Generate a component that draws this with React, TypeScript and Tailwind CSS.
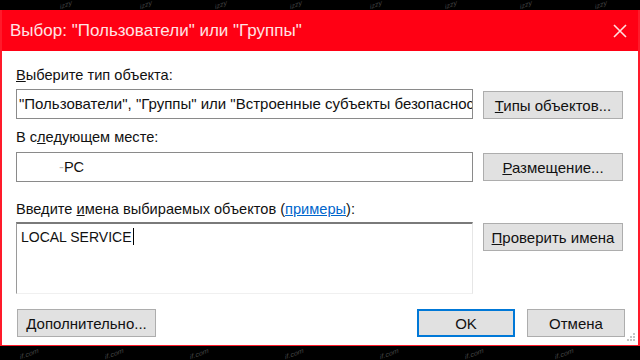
import React from "react";

const font = "font-['Segoe_UI','Liberation_Sans',Arial,sans-serif]";

function Btn({ children, primary }: { children: React.ReactNode; primary?: boolean }) {
  return (
    <button
      className={`h-[28px] w-full bg-[#e1e1e1] text-[15px] text-[#111] leading-none ${
        primary ? "border-2 border-[#0078d7]" : "border border-[#adadad]"
      }`}
    >
      {children}
    </button>
  );
}

const marksTop = [60, 140, 215, 290, 370, 445, 520, 595];
const marksBottom = [20, 105, 190, 285, 380, 465, 555];

export default function App() {
  return (
    <div className={`relative h-[360px] w-[640px] overflow-hidden bg-black ${font}`}>
      {marksTop.map((x) => (
        <span
          key={"t" + x}
          className="absolute top-[1px] -skew-y-[20deg] text-[7px] leading-none text-[#454545]"
          style={{ left: x }}
        >
          izzy
        </span>
      ))}
      {marksBottom.map((x) => (
        <span
          key={"b" + x}
          className="absolute top-[350px] -skew-y-[20deg] text-[7px] leading-none text-[#454545]"
          style={{ left: x }}
        >
          if.com
        </span>
      ))}

      <div className="relative mt-[10px] flex h-[336px] flex-col border-x-2 border-b border-[#ff1a2a] bg-white">
        {/* title bar */}
        <div className="flex h-[41px] shrink-0 items-center justify-between bg-[#ff0014] pl-[8px] pr-[10px]">
          <span className="text-[17px] text-[#ffe4e4]">Выбор: "Пользователи" или "Группы"</span>
          <svg width="14" height="14" viewBox="0 0 14 14" className="mr-[1px]">
            <path d="M1 1 L13 13 M13 1 L1 13" stroke="#ffe0e0" strokeWidth="1.6" />
          </svg>
        </div>

        <div className="flex flex-1 flex-col pl-[14px] pr-[13px] pt-[15px] text-[14.6px] text-[#111]">
          <div className="leading-[18px]">
            <u>В</u>ыберите тип объекта:
          </div>
          <div className="mt-[5px] flex items-start gap-[10px]">
            <div className="h-[30px] w-[457px] overflow-hidden whitespace-nowrap border border-[#8a8a8a] pl-[2px] text-[15px] leading-[28px]">
              "Пользователи", "Группы" или "Встроенные субъекты безопасности"
            </div>
            <div className="mt-[2px] w-[140px]">
              <Btn>
                <u>Т</u>ипы объектов...
              </Btn>
            </div>
          </div>

          <div className="mt-[9px] leading-[18px]">
            В с<u>л</u>едующем месте:
          </div>
          <div className="mt-[6px] flex items-start gap-[10px]">
            <div className="h-[30px] w-[457px] border border-[#8a8a8a] pl-[42px] leading-[28px]">
              <span className="text-[#bbb]">-</span>PC
            </div>
            <div className="mt-[1px] w-[140px]">
              <Btn>
                <u>Р</u>азмещение...
              </Btn>
            </div>
          </div>

          <div className="mt-[18px] leading-[18px]">
            Введите <u>и</u>мена выбираемых объектов (
            <span className="text-[#0066cc] underline">примеры</span>):
          </div>
          <div className="mt-[4px] flex items-start gap-[10px]">
            <div className="h-[72px] w-[457px] border-t-2 border-l border-t-[#7a7a7a] border-l-[#9a9a9a] border-r border-b border-r-[#e6e6e6] border-b-[#f0f0f0] pl-[4px] pt-[1px] text-[14px] leading-[20px]">
              LOCAL SERVICE<span className="ml-[1px] inline-block h-[17px] w-[1px] translate-y-[3px] bg-black" />
            </div>
            <div className="mt-[1px] w-[140px]">
              <Btn>
                <u>П</u>роверить имена
              </Btn>
            </div>
          </div>

          <div className="mt-[15px] flex items-center">
            <div className="ml-[1px] w-[139px]">
              <Btn>
                <u>Д</u>ополнительно...
              </Btn>
            </div>
            <div className="ml-auto flex gap-[12px]">
              <div className="w-[98px]">
                <Btn primary>OK</Btn>
              </div>
              <div className="w-[98px]">
                <Btn>Отмена</Btn>
              </div>
            </div>
          </div>
        </div>

        <svg width="10" height="10" viewBox="0 0 10 10" className="absolute bottom-[3px] right-[2px]">
          <rect x="7" y="1" width="2" height="2" fill="#c4c4c4" />
          <rect x="4" y="4" width="2" height="2" fill="#c4c4c4" />
          <rect x="7" y="4" width="2" height="2" fill="#c4c4c4" />
          <rect x="1" y="7" width="2" height="2" fill="#c4c4c4" />
          <rect x="4" y="7" width="2" height="2" fill="#c4c4c4" />
          <rect x="7" y="7" width="2" height="2" fill="#c4c4c4" />
        </svg>
      </div>
    </div>
  );
}
